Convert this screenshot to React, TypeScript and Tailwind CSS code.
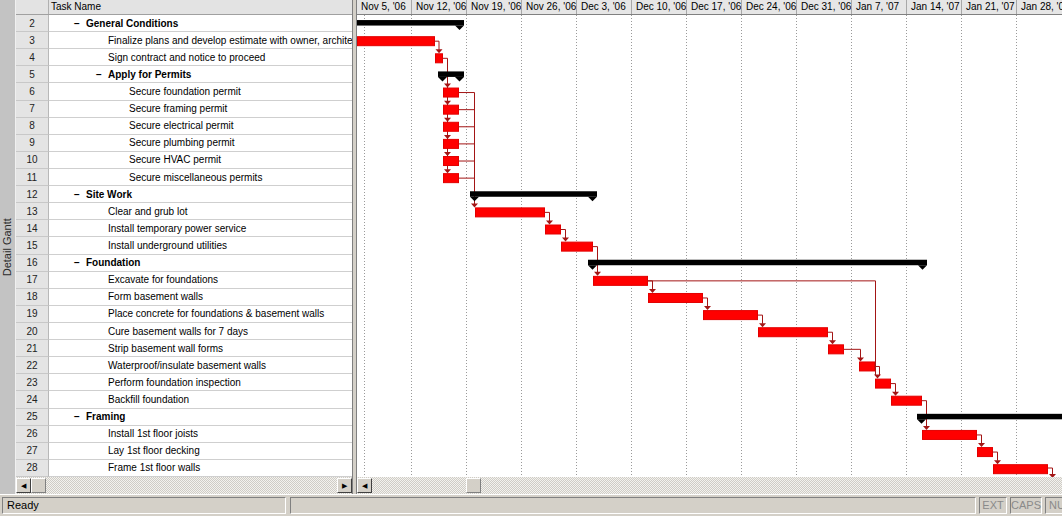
import React from "react";

const ROW_H = 17.12;
const TOP = 15;
const rc = (r: number) => TOP + (r - 2) * ROW_H + ROW_H / 2;

type Row = { id: number; name: string; level: 1 | 2 | 3; summary?: boolean };

const rows: Row[] = [
  { id: 2, name: "General Conditions", level: 1, summary: true },
  { id: 3, name: "Finalize plans and develop estimate with owner, architect", level: 2 },
  { id: 4, name: "Sign contract and notice to proceed", level: 2 },
  { id: 5, name: "Apply for Permits", level: 2, summary: true },
  { id: 6, name: "Secure foundation permit", level: 3 },
  { id: 7, name: "Secure framing permit", level: 3 },
  { id: 8, name: "Secure electrical permit", level: 3 },
  { id: 9, name: "Secure plumbing permit", level: 3 },
  { id: 10, name: "Secure HVAC permit", level: 3 },
  { id: 11, name: "Secure miscellaneous permits", level: 3 },
  { id: 12, name: "Site Work", level: 1, summary: true },
  { id: 13, name: "Clear and grub lot", level: 2 },
  { id: 14, name: "Install temporary power service", level: 2 },
  { id: 15, name: "Install underground utilities", level: 2 },
  { id: 16, name: "Foundation", level: 1, summary: true },
  { id: 17, name: "Excavate for foundations", level: 2 },
  { id: 18, name: "Form basement walls", level: 2 },
  { id: 19, name: "Place concrete for foundations & basement walls", level: 2 },
  { id: 20, name: "Cure basement walls for 7 days", level: 2 },
  { id: 21, name: "Strip basement wall forms", level: 2 },
  { id: 22, name: "Waterproof/insulate basement walls", level: 2 },
  { id: 23, name: "Perform foundation inspection", level: 2 },
  { id: 24, name: "Backfill foundation", level: 2 },
  { id: 25, name: "Framing", level: 1, summary: true },
  { id: 26, name: "Install 1st floor joists", level: 2 },
  { id: 27, name: "Lay 1st floor decking", level: 2 },
  { id: 28, name: "Frame 1st floor walls", level: 2 },
];

const weeks = [
  "Nov 5, '06", "Nov 12, '06", "Nov 19, '06", "Nov 26, '06", "Dec 3, '06", "Dec 10, '06",
  "Dec 17, '06", "Dec 24, '06", "Dec 31, '06", "Jan 7, '07", "Jan 14, '07", "Jan 21, '07", "Jan 28, '07",
];

type Bar = { r: number; x1: number; x2: number; s?: boolean };
const bars: Bar[] = [
  { r: 2, x1: 346, x2: 464, s: true },
  { r: 3, x1: 357, x2: 435 },
  { r: 4, x1: 435, x2: 443 },
  { r: 5, x1: 438, x2: 464, s: true },
  { r: 6, x1: 443, x2: 459 },
  { r: 7, x1: 443, x2: 459 },
  { r: 8, x1: 443, x2: 459 },
  { r: 9, x1: 443, x2: 459 },
  { r: 10, x1: 443, x2: 459 },
  { r: 11, x1: 443, x2: 459 },
  { r: 12, x1: 470, x2: 597, s: true },
  { r: 13, x1: 475, x2: 545 },
  { r: 14, x1: 545, x2: 561 },
  { r: 15, x1: 561, x2: 593 },
  { r: 16, x1: 588, x2: 927, s: true },
  { r: 17, x1: 593, x2: 648 },
  { r: 18, x1: 648, x2: 703 },
  { r: 19, x1: 703, x2: 758 },
  { r: 20, x1: 758, x2: 828 },
  { r: 21, x1: 828, x2: 844 },
  { r: 22, x1: 859, x2: 875 },
  { r: 23, x1: 875, x2: 891 },
  { r: 24, x1: 891, x2: 922 },
  { r: 25, x1: 917, x2: 1100, s: true },
  { r: 26, x1: 922, x2: 977 },
  { r: 27, x1: 977, x2: 993 },
  { r: 28, x1: 993, x2: 1048 },
];

// finish-to-start link: from end of predecessor row p at x, over to vx, down to row s
type Link = { p: number; x: number; vx: number; s: number };
const links: Link[] = [
  { p: 3, x: 435, vx: 438.5, s: 4 },
  { p: 4, x: 443, vx: 447, s: 11 },
  { p: 6, x: 459, vx: 474, s: 13 },
  { p: 7, x: 459, vx: 474, s: 13 },
  { p: 8, x: 459, vx: 474, s: 13 },
  { p: 9, x: 459, vx: 474, s: 13 },
  { p: 10, x: 459, vx: 474, s: 13 },
  { p: 11, x: 459, vx: 474, s: 13 },
  { p: 13, x: 545, vx: 549, s: 14 },
  { p: 14, x: 561, vx: 565, s: 15 },
  { p: 15, x: 593, vx: 597, s: 17 },
  { p: 17, x: 648, vx: 652, s: 18 },
  { p: 17, x: 648, vx: 875, s: 23 },
  { p: 18, x: 703, vx: 707, s: 19 },
  { p: 19, x: 758, vx: 762, s: 20 },
  { p: 20, x: 828, vx: 832, s: 21 },
  { p: 21, x: 844, vx: 860, s: 22 },
  { p: 22, x: 875, vx: 879, s: 23 },
  { p: 23, x: 891, vx: 895, s: 24 },
  { p: 24, x: 922, vx: 926, s: 26 },
  { p: 26, x: 977, vx: 981, s: 27 },
  { p: 27, x: 993, vx: 997, s: 28 },
];

const arrows: [number, number][] = [
  [438.5, 4], [447, 6], [447, 7], [447, 8], [447, 9], [447, 10], [447, 11], [474, 13], [549, 14], [565, 15],
  [597, 17], [652, 18], [707, 19], [762, 20], [832, 21], [860, 22], [877, 23], [895, 24], [926, 26], [981, 27], [997, 28],
];

const LINK = "#a31515";
const gridX = [364, 411, 466, 521, 576, 631, 686, 741, 796, 851, 906, 961, 1016];

function Chart() {
  return (
    <svg width={705} height={462} viewBox="357 15 705 462" className="block shrink-0">
      <rect x={357} y={15} width={705} height={462} fill="#ffffff" />
      {gridX.map((x) => (
        <line key={x} x1={x + 0.5} y1={15} x2={x + 0.5} y2={477} stroke="#9a9a9a" strokeDasharray="1 2" />
      ))}
      {links.map((l, i) => {
        const y = rc(l.p);
        const yEnd = rc(l.s) - 8;
        return (
          <polyline
            key={i}
            points={`${l.x},${y + 0.5} ${l.vx + 0.5},${y + 0.5} ${l.vx + 0.5},${yEnd}`}
            fill="none"
            stroke={LINK}
            strokeWidth={1}
          />
        );
      })}
      <polyline points="1048,468 1052.5,468 1052.5,474" fill="none" stroke={LINK} />
      <polygon points="1049,474 1056,474 1052.5,478" fill={LINK} />
      {bars.map((b) => {
        const c = rc(b.r);
        if (b.s) {
          return (
            <g key={b.r} fill="#000000">
              <rect x={b.x1} y={c - 3.5} width={b.x2 - b.x1} height={5.5} />
              <polygon points={`${b.x1},${c + 2} ${b.x1 + 9},${c + 2} ${b.x1 + 4.5},${c + 6.5}`} />
              <polygon points={`${b.x2 - 9},${c + 2} ${b.x2},${c + 2} ${b.x2 - 4.5},${c + 6.5}`} />
            </g>
          );
        }
        return (
          <rect
            key={b.r}
            x={b.x1 + 0.5}
            y={c - 4}
            width={b.x2 - b.x1 - 1}
            height={9}
            fill="#ff0000"
            stroke="#e20000"
            strokeWidth={1}
          />
        );
      })}
      {arrows.map(([x, r], i) => {
        const top = rc(r) - 4.5;
        return <polygon key={i} points={`${x - 3},${top - 4} ${x + 4},${top - 4} ${x + 0.5},${top}`} fill={LINK} />;
      })}
    </svg>
  );
}

function ScrollBtn({ dir }: { dir: "left" | "right" }) {
  return (
    <div className="flex h-[15px] w-[15px] shrink-0 items-center justify-center border border-t-white border-l-white border-r-[#404040] border-b-[#404040] bg-[#d4d0c8] text-[7px] leading-none text-black">
      {dir === "left" ? "◀" : "▶"}
    </div>
  );
}

function Thumb() {
  return <div className="h-[15px] w-[15px] shrink-0 border border-t-white border-l-white border-r-[#808080] border-b-[#808080] bg-[#d4d0c8]" />;
}

const hatch = "bg-[repeating-conic-gradient(#cfccc6_0%_25%,#f3f2ee_0%_50%)] bg-[length:2px_2px]";
const sunken = "h-[17px] shrink-0 border border-t-[#808080] border-l-[#808080] border-r-white border-b-white";

export default function App() {
  return (
    <div className="flex h-[516px] w-[1062px] flex-col overflow-hidden bg-[#d4d0c8] font-['Liberation_Sans',Arial,sans-serif] text-black">
      <div className="flex h-[494px] shrink-0">
        <div className="flex w-[16px] shrink-0 items-center justify-center border-r border-[#f0f0f0] bg-[#c3c3c3]">
          <span className="-rotate-90 whitespace-nowrap text-[11px] text-[#2b2b2b]">Detail Gantt</span>
        </div>

        <div className="flex w-[336px] shrink-0 flex-col bg-white">
          <div className="flex h-[15px] shrink-0 border-b border-[#a0a0a0] bg-[#e3e3e3]">
            <div className="w-[33px] shrink-0 border-r border-[#b0b0b0]" />
            <div className="flex items-center pl-[2px] text-[10px] leading-none">Task Name</div>
          </div>
          {rows.map((r) => (
            <div key={r.id} className="flex h-[17.12px] shrink-0 text-[10px] leading-none">
              <div className="flex w-[33px] shrink-0 items-center justify-center border-r border-b border-[#b8b8b8] border-b-[#c8c8c8] bg-[#e4e4e4] pt-[1px] text-[#222]">
                {r.id}
              </div>
              <div className="flex min-w-0 flex-1 items-center overflow-hidden whitespace-nowrap border-b border-[#cfcfcf] pt-[1px]">
                {r.summary ? (
                  <div className={`flex items-center ${r.level === 1 ? "pl-[25px]" : "pl-[47px]"}`}>
                    <span className="w-[12px] font-bold">−</span>
                    <span className="font-bold">{r.name}</span>
                  </div>
                ) : (
                  <span className={r.level === 2 ? "pl-[59px]" : "pl-[80px]"}>{r.name}</span>
                )}
              </div>
            </div>
          ))}
          <div className={`flex flex-1 items-center ${hatch}`}>
            <div className="flex w-[33px] shrink-0 items-center">
              <ScrollBtn dir="left" />
              <Thumb />
            </div>
            <div className="flex-1" />
            <ScrollBtn dir="right" />
          </div>
        </div>

        <div className="w-[5px] shrink-0 border-l border-[#808080] border-r border-r-[#808080] bg-[#d4d0c8]" />

        <div className="flex w-[705px] shrink-0 flex-col overflow-hidden bg-white">
          <div className="flex h-[15px] shrink-0 border-b border-[#808080] bg-[#e6e6e6]">
            {weeks.map((w) => (
              <div
                key={w}
                className="flex w-[55px] shrink-0 items-center overflow-hidden whitespace-nowrap border-r border-[#a8a8a8] pl-[4px] text-[10px] leading-none"
              >
                {w}
              </div>
            ))}
          </div>
          <Chart />
          <div className={`flex flex-1 items-center ${hatch}`}>
            <ScrollBtn dir="left" />
            <div className="w-[94px] shrink-0" />
            <Thumb />
          </div>
        </div>
      </div>

      <div className="flex h-[22px] shrink-0 items-center overflow-hidden border-t border-white pl-[2px] text-[11px]">
        <div className={`${sunken} flex w-[284px] items-center pl-[4px]`}>Ready</div>
        <div className={`${sunken} ml-[4px] w-[686px]`} />
        <div className={`${sunken} ml-[3px] flex w-[28px] items-center justify-center text-[#8a8a8a]`}>EXT</div>
        <div className={`${sunken} ml-[3px] flex w-[32px] items-center justify-center text-[#8a8a8a]`}>CAPS</div>
        <div className={`${sunken} ml-[3px] flex w-[30px] items-center pl-[3px] text-[#8a8a8a]`}>NUM</div>
      </div>
    </div>
  );
}
